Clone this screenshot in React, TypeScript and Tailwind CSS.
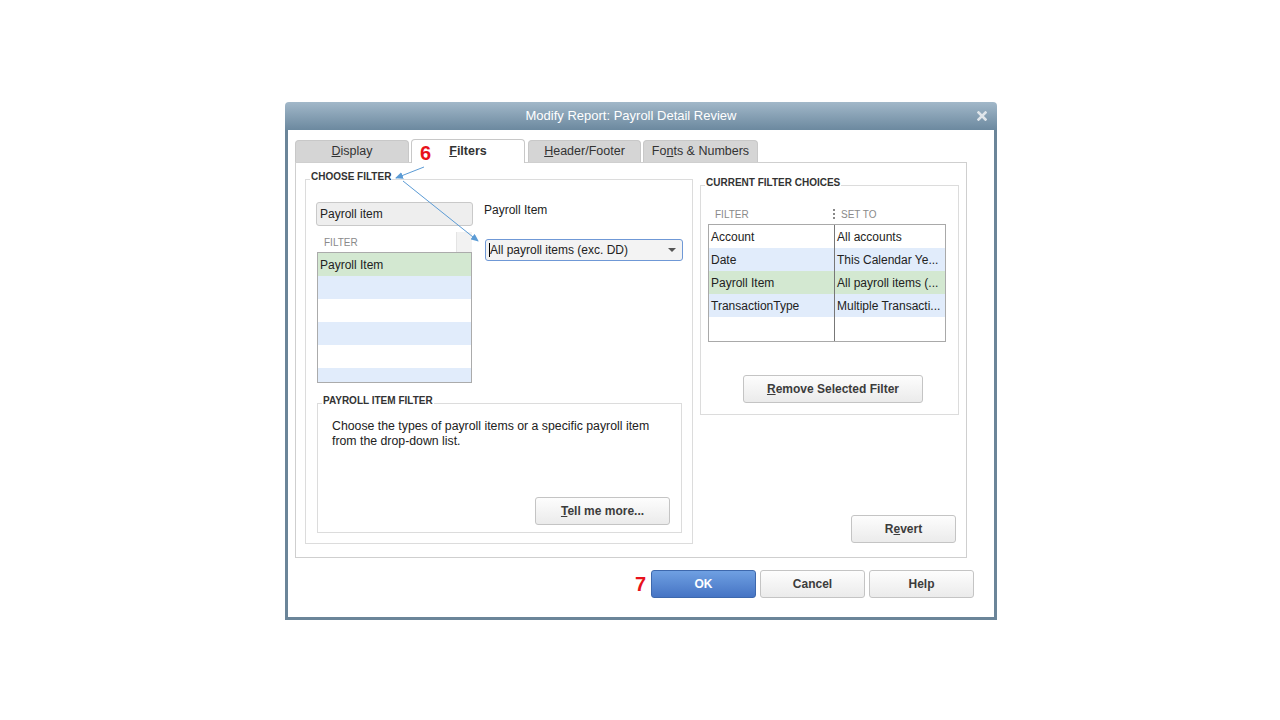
import React from "react";

const Btn = ({ children, className = "" }: { children: React.ReactNode; className?: string }) => (
  <div
    className={`flex items-center justify-center rounded-[3px] border border-[#c4c4c4] bg-linear-to-b from-[#fdfdfd] to-[#ebebeb] text-[12px] font-bold text-[#3c3c3c] ${className}`}
  >
    {children}
  </div>
);

const Group = ({ label, className = "", children }: { label: string; className?: string; children?: React.ReactNode }) => (
  <div className={`flex flex-col border border-[#dcdcdc] ${className}`}>
    <div className="-mt-[11px] ml-[4px] w-fit bg-white px-[1px] text-[10px] font-bold leading-[16px] text-[#333]">{label}</div>
    {children}
  </div>
);

const U = ({ children }: { children: React.ReactNode }) => <span className="underline">{children}</span>;

const filterRows = [
  { name: "Account", value: "All accounts", bg: "bg-white" },
  { name: "Date", value: "This Calendar Ye...", bg: "bg-[#e1ecfb]" },
  { name: "Payroll Item", value: "All payroll items (...", bg: "bg-[#d3e8d1]" },
  { name: "TransactionType", value: "Multiple Transacti...", bg: "bg-[#e1ecfb]" },
  { name: "", value: "", bg: "bg-white" },
];

const listRows = ["bg-[#d3e8d1]", "bg-[#e1ecfb]", "bg-white", "bg-[#e1ecfb]", "bg-white", "bg-[#e1ecfb]"];

export default function App() {
  return (
    <div className="h-[720px] w-[1280px] bg-white pl-[285px] pt-[102px] font-['Liberation_Sans',Arial,sans-serif] text-[#222]">
      <div className="relative flex h-[518px] w-[712px] flex-col">
        {/* title bar */}
        <div className="flex h-[28px] items-center rounded-t-[4px] bg-linear-to-b from-[#a2b8c9] to-[#6c899f]">
          <div className="flex-1 text-center text-[13px] text-white">Modify Report: Payroll Detail Review</div>
          <svg width="10" height="10" viewBox="0 0 10 10" className="mr-[10px]">
            <path d="M1.5 1.5 L8.5 8.5 M8.5 1.5 L1.5 8.5" stroke="#dfe5ea" strokeWidth="2.6" strokeLinecap="square" />
          </svg>
        </div>

        {/* body */}
        <div className="flex flex-1 flex-col border-x-[3px] border-b-[3px] border-[#6b8599] bg-white">
          {/* tabs */}
          <div className="ml-[7px] mt-[9px] flex h-[23px] items-end text-[12.5px] text-[#333]">
            <div className="flex h-[22px] w-[114px] items-center justify-center rounded-t-[4px] border border-b-0 border-[#c8c8c8] bg-[#d5d5d5]">
              <U>D</U>isplay
            </div>
            <div className="relative z-10 -mb-px ml-[2px] flex h-[24px] w-[114px] items-center justify-center rounded-t-[4px] border border-b-0 border-[#c8c8c8] bg-white font-bold">
              <U>F</U>ilters
            </div>
            <div className="ml-[3px] flex h-[22px] w-[113px] items-center justify-center rounded-t-[4px] border border-b-0 border-[#c8c8c8] bg-[#d5d5d5]">
              <U>H</U>eader/Footer
            </div>
            <div className="ml-[2px] flex h-[22px] w-[115px] items-center justify-center rounded-t-[4px] border border-b-0 border-[#c8c8c8] bg-[#d5d5d5]">
              Fo<U>n</U>ts &amp; Numbers
            </div>
          </div>

          {/* tab panel */}
          <div className="ml-[7px] flex h-[396px] w-[672px] border border-[#cfcfcf]">
            <Group label="CHOOSE FILTER" className="ml-[9px] mt-[16px] h-[365px] w-[388px]">
              <div className="ml-[10px] mt-[17px] flex">
                <div className="flex w-[157px] flex-col">
                  <div className="flex h-[24px] w-[157px] items-center rounded-[3px] border border-[#c9c9c9] bg-[#eeeeee] pl-[3px] text-[12px]">
                    Payroll item
                  </div>
                  <div className="ml-[1px] mt-[6px] flex h-[20px] w-[155px] items-center">
                    <span className="flex-1 pl-[7px] pt-px text-[10px] text-[#8a8a8a]">FILTER</span>
                    <span className="h-[20px] w-[16px] border-l border-[#e4e4e4] bg-[#f2f2f2]" />
                  </div>
                  <div className="ml-[1px] flex h-[131px] w-[155px] flex-col overflow-hidden border border-[#ababab]">
                    {listRows.map((bg, i) => (
                      <div key={i} className={`h-[23px] shrink-0 pl-[2px] pt-px text-[12px] leading-[23px] ${bg}`}>
                        {i === 0 ? "Payroll Item" : ""}
                      </div>
                    ))}
                  </div>
                </div>
                <div className="ml-[12px] flex flex-col">
                  <div className="-ml-px text-[12px] leading-[16px]">Payroll Item</div>
                  <div className="mt-[21px] flex h-[22px] w-[198px] items-center rounded-[3px] border border-[#6f98d6] bg-[#f3f3f3] text-[12px]">
                    <span className="ml-[3px] h-[14px] w-px bg-black" />
                    <span className="flex-1">All payroll items (exc. DD)</span>
                    <span className="mr-[6px] h-0 w-0 border-x-[4px] border-t-[4px] border-x-transparent border-t-[#555]" />
                  </div>
                </div>
              </div>

              <Group label="PAYROLL ITEM FILTER" className="ml-[11px] mt-[20px] h-[130px] w-[365px]">
                <div className="ml-[14px] mt-[10px] text-[12.3px] leading-[15px]">
                  Choose the types of payroll items or a specific payroll item
                  <br />
                  from the drop-down list.
                </div>
                <Btn className="mb-[7px] mr-[11px] mt-auto h-[28px] w-[135px] self-end">
                  <span>
                    <U>T</U>ell me more...
                  </span>
                </Btn>
              </Group>
            </Group>

            <div className="ml-[7px] flex flex-col">
              <Group label="CURRENT FILTER CHOICES" className="mt-[22px] h-[230px] w-[259px]">
                <div className="ml-[7px] mt-[13px] flex h-[20px] w-[238px] items-center text-[10px] text-[#8a8a8a]">
                  <span className="w-[125px] pl-[7px] pt-px">FILTER</span>
                  <span className="flex flex-col gap-[2px]">
                    <span className="h-[2px] w-[2px] bg-[#888]" />
                    <span className="h-[2px] w-[2px] bg-[#888]" />
                    <span className="h-[2px] w-[2px] bg-[#888]" />
                  </span>
                  <span className="pl-[6px] pt-px">SET TO</span>
                </div>
                <div className="ml-[7px] flex h-[118px] w-[238px] flex-col border border-[#a9a9a9] text-[12px]">
                  {filterRows.map((r, i) => (
                    <div key={i} className={`flex h-[23px] shrink-0 leading-[24px] ${r.bg}`}>
                      <span className="w-[125px] pl-[2px]">{r.name}</span>
                      <span className="flex-1 overflow-hidden whitespace-nowrap border-l border-[#777] pl-[2px]">{r.value}</span>
                    </div>
                  ))}
                  <div className="ml-[125px] flex-1 border-l border-[#777]" />
                </div>
                <Btn className="ml-[42px] mt-[33px] h-[28px] w-[180px]">
                  <span>
                    <U>R</U>emove Selected Filter
                  </span>
                </Btn>
              </Group>
              <Btn className="ml-[151px] mt-[100px] h-[28px] w-[105px]">
                <span>
                  R<U>e</U>vert
                </span>
              </Btn>
            </div>
          </div>

          {/* bottom buttons */}
          <div className="mt-[12px] flex items-center justify-end pr-[20px]">
            <span className="mr-[5px] text-[20px] font-bold leading-[20px] text-[#e8121b]">7</span>
            <div className="flex h-[28px] w-[105px] items-center justify-center rounded-[3px] border border-[#3d68ad] bg-linear-to-b from-[#6fa0e2] to-[#4674c4] text-[12px] font-bold text-white">
              OK
            </div>
            <Btn className="ml-[4px] h-[28px] w-[105px]">Cancel</Btn>
            <Btn className="ml-[4px] h-[28px] w-[105px]">Help</Btn>
          </div>
        </div>

        {/* annotation overlay */}
        <span className="absolute left-[135px] top-[41px] z-20 text-[20px] font-bold leading-[20px] text-[#e8121b]">6</span>
        <svg className="pointer-events-none absolute left-0 top-0 z-20" width="712" height="518">
          <defs>
            <marker id="ah" markerWidth="8" markerHeight="7" refX="7" refY="3.5" orient="auto" markerUnits="userSpaceOnUse">
              <path d="M0 0 L8 3.5 L0 7 Z" fill="#5b9bd5" />
            </marker>
          </defs>
          <line x1="139" y1="65" x2="111" y2="76" stroke="#5b9bd5" strokeWidth="1" markerEnd="url(#ah)" />
          <line x1="118" y1="79" x2="193" y2="139" stroke="#5b9bd5" strokeWidth="1" markerEnd="url(#ah)" />
        </svg>
      </div>
    </div>
  );
}
